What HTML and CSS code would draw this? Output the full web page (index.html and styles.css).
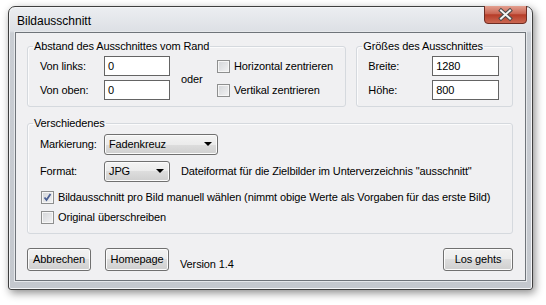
FILE: index.html
```html
<!DOCTYPE html>
<html>
<head>
<meta charset="utf-8">
<link rel="stylesheet" href="styles.css">
</head>
<body>
<div class="window">
  <div class="titlebar">
    <span class="title">Bildausschnitt</span>
    <div class="close">
      <svg width="43" height="18" viewBox="0 0 43 18">
        <defs>
          <linearGradient id="cg" x1="0" y1="0" x2="0" y2="1">
            <stop offset="0" stop-color="#e3a090"/>
            <stop offset="0.45" stop-color="#c96452"/>
            <stop offset="0.5" stop-color="#b63c28"/>
            <stop offset="1" stop-color="#cc6a55"/>
          </linearGradient>
        </defs>
        <path d="M0.5 0 V14 Q0.5 17.5 4 17.5 H39 Q42.5 17.5 42.5 14 V0" fill="url(#cg)" stroke="#6d2d24"/>
        <path d="M17 4.5 L26 12.5 M26 4.5 L17 12.5" stroke="#4a4a4a" stroke-width="4" stroke-linecap="square"/>
        <path d="M17 4.5 L26 12.5 M26 4.5 L17 12.5" stroke="#f4f4f4" stroke-width="2" stroke-linecap="square"/>
      </svg>
    </div>
  </div>
  <div class="client">
    <div class="top-row">
      <fieldset class="group g1">
        <legend>Abstand des Ausschnittes vom Rand</legend>
        <div class="g1-body">
          <div class="fields">
            <span class="lbl">Von links:</span><div class="input">0</div>
            <span class="lbl">Von oben:</span><div class="input">0</div>
          </div>
          <span class="oder">oder</span>
          <div class="checks">
            <div class="check"><span class="box"></span><span>Horizontal zentrieren</span></div>
            <div class="check"><span class="box"></span><span>Vertikal zentrieren</span></div>
          </div>
        </div>
      </fieldset>
      <fieldset class="group g2">
        <legend>Größes des Ausschnittes</legend>
        <div class="fields fields2">
          <span class="lbl">Breite:</span><div class="input">1280</div>
          <span class="lbl">Höhe:</span><div class="input">800</div>
        </div>
      </fieldset>
    </div>
    <fieldset class="group g3">
      <legend>Verschiedenes</legend>
      <div class="g3-body">
        <div class="row">
          <span class="lbl lbl3">Markierung:</span>
          <div class="combo combo-wide"><span>Fadenkreuz</span><span class="arrow"></span></div>
        </div>
        <div class="row row2">
          <span class="lbl lbl3">Format:</span>
          <div class="combo combo-small"><span>JPG</span><span class="arrow"></span></div>
          <span class="hint">Dateiformat für die Zielbilder im Unterverzeichnis "ausschnitt"</span>
        </div>
        <div class="check check3 first"><span class="box checked">
          <svg width="11" height="11" viewBox="0 0 11 11"><path d="M2.5 5.5 L4.5 8 L8.5 2" fill="none" stroke="#4a5f93" stroke-width="1.8"/></svg>
        </span><span>Bildausschnitt pro Bild manuell wählen (nimmt obige Werte als Vorgaben für das erste Bild)</span></div>
        <div class="check check3"><span class="box"></span><span>Original überschreiben</span></div>
      </div>
    </fieldset>
    <div class="buttons">
      <div class="btn">Abbrechen</div>
      <div class="btn">Homepage</div>
      <span class="version">Version 1.4</span>
      <div class="btn btn-go">Los gehts</div>
    </div>
  </div>
</div>
</body>
</html>
```

FILE: styles.css
```css
* { box-sizing: border-box; }
html, body { margin: 0; padding: 0; }
body {
  background: #ffffff;
  width: 546px;
  height: 305px;
  overflow: hidden;
  font-family: "Liberation Sans", Arial, sans-serif;
  font-size: 11px;
  letter-spacing: -0.12px;
  color: #000;
}
.window {
  margin: 6px 0 0 8px;
  width: 525px;
  height: 284px;
  border: 1px solid #3f3f3f;
  border-radius: 7px 7px 3px 3px;
  background: linear-gradient(#eceef1, #dde0e5 24px, #c9cdd3 26px, #c4c8ce);
  box-shadow: 2px 3px 9px rgba(0,0,0,.45), inset 0 0 0 1px #f4f5f7;
  display: flex;
  flex-direction: column;
  padding: 0 6px 8px 6px;
}
.titlebar {
  height: 25px;
  display: flex;
  justify-content: space-between;
  align-items: flex-start;
}
.title {
  font-size: 12px;
  letter-spacing: 0;
  padding: 7px 0 0 2px;
  line-height: 14px;
}
.close { margin-right: -1px; margin-top: -1px; height: 18px; }
.close svg { display: block; }
.client {
  flex: 1;
  background: #f0f0f2;
  border: 1px solid #6f747a;
  box-shadow: 0 0 0 1px #e6e8eb;
  padding: 6px 12px 0 11px;
  display: flex;
  flex-direction: column;
}
.top-row { display: flex; gap: 10px; }
.group {
  margin: 0;
  padding: 0;
  border: 1px solid #d5d9de;
  border-radius: 3px;
  box-shadow: inset 1px 1px 0 #fbfbfc;
  min-width: 0;
}
.group legend {
  padding: 0 1px;
  margin-left: 5px;
  line-height: 14px;
}
.g1 { width: 320px; padding: 3px 0 6px 0; }
.g2 { width: 157px; padding: 3px 0 6px 0; }
.g1-body { display: flex; padding-left: 12px; }
.fields {
  display: grid;
  grid-template-columns: 64px 66px;
  grid-template-rows: 20px 20px;
  row-gap: 4px;
  align-items: center;
}
.fields2 { grid-template-columns: 64px 67px; padding-left: 11px; }
.input {
  height: 20px;
  border: 1px solid #646464;
  background: #fff;
  padding: 0 3px;
  line-height: 18px;
}
.oder {
  width: 47px;
  padding-left: 11px;
  align-self: center;
  padding-top: 1px;
}
.checks { display: grid; grid-template-rows: 20px 20px; row-gap: 4px; }
.check { display: flex; align-items: center; }
.box {
  width: 13px;
  height: 13px;
  border: 1px solid #8e8f8f;
  background: linear-gradient(135deg, #d3d5d8, #f3f3f4);
  box-shadow: inset 0 0 0 1px #f6f6f6;
  margin-right: 4px;
  flex: none;
  display: flex;
  align-items: center;
  justify-content: center;
}
.box svg { display: block; }
.g3 { margin-top: 9px; padding: 3px 0 6px 0; }
.g3-body { display: flex; flex-direction: column; padding-left: 12px; }
.row { display: flex; align-items: center; height: 22px; }
.row2 { margin-top: 5px; }
.lbl3 { width: 64px; }
.combo {
  height: 21px;
  border: 1px solid #707070;
  border-radius: 3px;
  background: linear-gradient(#f3f3f3, #ebebeb 50%, #dddddd 50%, #cfcfcf);
  box-shadow: inset 0 0 0 1px #fbfbfb;
  display: flex;
  align-items: center;
  justify-content: space-between;
  padding: 0 4px 0 4px;
}
.combo-wide { width: 114px; }
.combo-small { width: 66px; }
.arrow {
  width: 0;
  height: 0;
  border-left: 4px solid transparent;
  border-right: 4px solid transparent;
  border-top: 4px solid #000;
  margin-right: 1px;
}
.hint { margin-left: 11px; }
.check3 { height: 20px; padding-left: 1px; }
.check3.first { margin-top: 5px; }
.buttons {
  display: flex;
  align-items: flex-end;
  margin-top: 14px;
}
.btn {
  width: 64px;
  height: 23px;
  border: 1px solid #707070;
  border-radius: 3px;
  background: linear-gradient(#f2f2f2, #ebebeb 50%, #dddddd 50%, #cfcfcf);
  box-shadow: inset 0 0 0 1px #fcfcfc;
  display: flex;
  align-items: center;
  justify-content: center;
  padding-bottom: 1px;
}
.btn + .btn { margin-left: 14px; }
.version { margin-left: 11px; line-height: 14px; }
.btn-go { margin-left: auto; width: 70px; }
```
